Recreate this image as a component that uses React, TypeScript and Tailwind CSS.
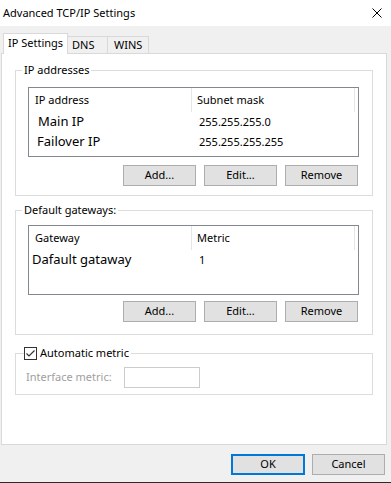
import React from "react";

const ui = { fontFamily: '"Noto Sans", "Liberation Sans", sans-serif' };

function Btn({ children, primary }: { children: React.ReactNode; primary?: boolean }) {
  return (
    <div
      className={`flex h-[21px] items-center justify-center bg-[#e1e1e1] text-[11px] text-black ${
        primary ? "w-[74px] border-2 border-[#0078d7]" : "w-[73px] border border-[#adadad]"
      }`}
    >
      {children}
    </div>
  );
}

function ListBox({
  cols,
  rows,
}: {
  cols: [string, string];
  rows: { a: string; b: string; ax: string }[];
}) {
  return (
    <div className="h-[70px] border border-[#828790] bg-white">
      <div className="flex h-[24px] text-[11px] leading-[24px]">
        <div className="w-[163px] border-r border-[#e5e5e5] pl-[6px]">{cols[0]}</div>
        <div className="w-[163px] border-r border-[#e5e5e5] pl-[5px]">{cols[1]}</div>
      </div>
      {rows.map((r) => (
        <div key={r.a} className="flex h-[20px] items-center">
          <div className={`w-[164px] text-[13px] ${r.ax}`}>{r.a}</div>
          <div className="pl-[6px] text-[11px]">{r.b}</div>
        </div>
      ))}
    </div>
  );
}

export default function App() {
  return (
    <div className="flex h-[483px] w-[391px] flex-col overflow-hidden whitespace-nowrap border-b border-[#2b2b2b] bg-[#f0f0f0] text-black" style={ui}>
      <div className="flex h-[26px] items-center justify-between bg-white pl-[3px] pr-[9px]">
        <span className="text-[11px]">Advanced TCP/IP Settings</span>
        <svg width="10" height="10" viewBox="0 0 10 10">
          <path d="M0.5 0.5 L9.5 9.5 M9.5 0.5 L0.5 9.5" stroke="#000" strokeWidth="1" />
        </svg>
      </div>

      <div className="ml-[3px] mt-[7px] flex items-end text-[11px]">
        <div className="relative z-10 -mb-px flex h-[21px] w-[65px] items-center border border-b-0 border-[#d9d9d9] bg-white pb-[1px] pl-[4px]">
          IP Settings
        </div>
        <div className="flex h-[17px] w-[40px] items-center border-r border-t border-[#d9d9d9] pl-[4px]">DNS</div>
        <div className="flex h-[17px] w-[41px] items-center border-r border-t border-[#d9d9d9] pl-[6px]">WINS</div>
      </div>

      <div className="ml-[1px] flex h-[392px] w-[386px] flex-col border border-[#d9d9d9] bg-white px-[13px] pt-[8px]">
        <fieldset className="border border-[#dcdcdc]">
          <legend className="ml-[6px] px-[2px] text-[11px] leading-[16px]">IP addresses</legend>
          <div className="pb-[9px] pl-[12px] pr-[13px] pt-[9px]">
            <ListBox
              cols={["IP address", "Subnet mask"]}
              rows={[
                { a: "Main IP", b: "255.255.255.0", ax: "pl-[9px]" },
                { a: "Failover IP", b: "255.255.255.255", ax: "pl-[8px]" },
              ]}
            />
            <div className="mt-[8px] flex justify-end gap-[8px] pr-px">
              <Btn>Add...</Btn>
              <Btn>Edit...</Btn>
              <Btn>Remove</Btn>
            </div>
          </div>
        </fieldset>

        <fieldset className="mt-[6px] border border-[#dcdcdc]">
          <legend className="ml-[6px] px-[2px] text-[11px] leading-[16px]">Default gateways:</legend>
          <div className="pb-[12px] pl-[12px] pr-[13px] pt-[7px]">
            <ListBox cols={["Gateway", "Metric"]} rows={[{ a: "Dafault gataway", b: "1", ax: "pl-[3px]" }]} />
            <div className="mt-[6px] flex justify-end gap-[8px] pr-px">
              <Btn>Add...</Btn>
              <Btn>Edit...</Btn>
              <Btn>Remove</Btn>
            </div>
          </div>
        </fieldset>

        <fieldset className="mt-[10px] border border-[#dcdcdc]">
          <legend className="ml-[8px] flex h-[16px] items-center gap-[3px] pr-[2px] text-[11px]">
            <span className="flex h-[13px] w-[13px] items-center justify-center border border-[#333333] bg-white">
              <svg width="11" height="11" viewBox="0 0 11 11">
                <path d="M1.5 5.5 L4 8 L9.5 2.5" fill="none" stroke="#333333" strokeWidth="1.2" />
              </svg>
            </span>
            Automatic metric
          </legend>
          <div className="flex items-center pb-[6px] pl-[10px] pt-[6px]">
            <span className="w-[98px] text-[11px] text-[#a0a0a0]">Interface metric:</span>
            <div className="h-[21px] w-[76px] border border-[#cccccc] bg-white" />
          </div>
        </fieldset>
      </div>

      <div className="mt-[9px] flex justify-end gap-[7px] pr-[6px]">
        <Btn primary>OK</Btn>
        <Btn>Cancel</Btn>
      </div>
    </div>
  );
}
